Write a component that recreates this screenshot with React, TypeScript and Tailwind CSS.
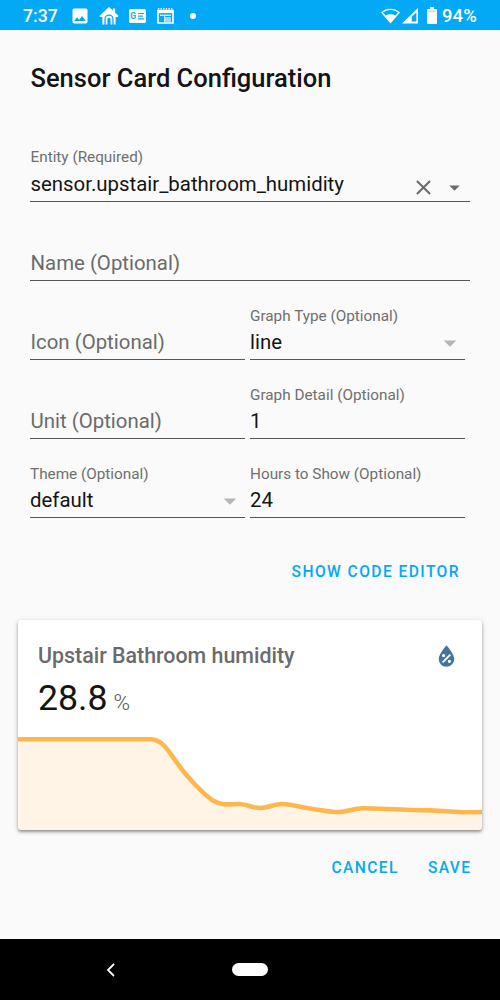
import { MdImage, MdClose, MdArrowDropDown } from 'react-icons/md';

type FieldProps = {
  label: string;
  value?: string;
  dropdown?: boolean;
  className?: string;
};

function Field({ label, value, dropdown, className = '' }: FieldProps) {
  return (
    <div className={`flex h-[79px] flex-col justify-end border-b border-[#555555] ${className}`}>
      {value && <div className="h-[19px] text-[15.3px] leading-5 text-[#6f6f6f]">{label}</div>}
      <div className="flex h-[34px] items-center justify-between">
        <span className={`text-[20.4px] leading-[34px] ${value ? 'text-[#141414]' : 'pl-[0.5px] text-[#6b6b6b]'}`}>
          {value || label}
        </span>
        {dropdown && <MdArrowDropDown className="mt-px size-[30px] text-[#b5b5b5]" />}
      </div>
    </div>
  );
}

function StatusBar() {
  return (
    <div className="flex h-[30px] items-center justify-between bg-[#03a9f4] pr-[23px] pl-[23px] text-white">
      <div className="flex items-center pt-px">
        <span className="w-[47px] text-[17.6px] leading-[30px] font-medium">7:37</span>
        <MdImage className="size-5" />
        <svg viewBox="0 0 20 20" className="ml-[9px] size-5" fill="currentColor">
          <path d="M10 1 L14 4.6 V2.4 H16.2 V6.7 L19.6 10 L18.6 11 H16.6 V18.5 H14.6 V13 A4.6 4.6 0 0 0 5.4 13 V18.5 H3.4 V11 H1.4 L.4 10Z" />
          <path d="M6.7 18.5 V13 A3.3 3.3 0 0 1 13.3 13 V18.5 H11.6 V13.4 A1.6 1.6 0 0 0 8.4 13.4 V18.5Z" />
        </svg>
        <svg viewBox="0 0 17 14" className="ml-[10px] h-[14px] w-[17px]">
          <rect width="17" height="14" rx="1.5" fill="currentColor" />
          <text x="1.2" y="10" fontSize="8.5" fontWeight="700" fill="#03a9f4">G</text>
          <path d="M9 4.5H15M9 7.2H14M9 9.9H15" stroke="#03a9f4" strokeWidth="1.2" />
        </svg>
        <svg viewBox="0 0 17 16" className="ml-[11px] h-4 w-[17px]" fill="none" stroke="currentColor">
          <path d="M1 2.5H16V15H1Z" strokeWidth="1.6" />
          <path d="M1 4H16" strokeWidth="2.2" />
          <path d="M1 .8H16" strokeWidth="1.4" strokeDasharray="1.3 1.3" />
          <path d="M3 7.3H14" strokeWidth="1.3" />
          <path d="M8 9H14V14H8Z" fill="#ffffff" fillOpacity="0.6" stroke="none" />
          <path d="M7.6 8V14" strokeWidth="0.8" />
        </svg>
        <span className="ml-[16px] size-[6px] rounded-full bg-white" />
      </div>
      <div className="flex items-center pt-px">
        <svg viewBox="0 0 19 16" className="h-4 w-[19px]">
          <path d="M1 4.5 C5.5 .3 13.5 .3 18 4.5 L9.5 14.4Z" fill="none" stroke="currentColor" strokeWidth="1.4" />
          <path d="M4 8 C7 5.7 12 5.7 15 8 L9.5 14.8Z" fill="currentColor" />
        </svg>
        <svg viewBox="0 0 16 16" className="ml-[2px] size-4">
          <path d="M0 15.5 L16 0 V15.5Z M9.7 13.6 H14.4 V4.4 L9.7 8.8Z" fill="currentColor" fillRule="evenodd" />
        </svg>
        <svg viewBox="0 0 10 17" className="ml-[9px] h-[17px] w-[10px]" fill="currentColor">
          <path d="M3 0H7V2H9Q10 2 10 3V16Q10 17 9 17H1Q0 17 0 16V3Q0 2 1 2H3Z" />
          <path d="M1.5 4.2H8.5" stroke="#7dd1f8" strokeWidth="1" />
        </svg>
        <span className="ml-[5px] text-[18.4px] leading-[30px] font-medium tracking-[0.2px]">94%</span>
      </div>
    </div>
  );
}

function SensorCard() {
  return (
    <div className="mx-[18px] mt-[31px] flex h-[210px] flex-col rounded-[3px] bg-white shadow-[0_2px_3px_rgba(0,0,0,0.35),0_1px_6px_rgba(0,0,0,0.12)]">
      <div className="flex h-[46px] items-end justify-between pr-[20px] pl-5">
        <span className="-mb-px text-[21.4px] leading-[22px] font-medium text-[#6b6b6b]">Upstair Bathroom humidity</span>
        <svg viewBox="0 0 24 24" className="-mb-[6px] size-[31px] fill-[#44739e]">
          <path d="M12,3.25C12,3.25 6,10 6,14C6,17.32 8.69,20 12,20A6,6 0 0,0 18,14C18,10 12,3.25 12,3.25M14.47,9.97L15.53,11.03L9.53,17.03L8.47,15.97M9.75,10A1.25,1.25 0 0,1 11,11.25A1.25,1.25 0 0,1 9.75,12.5A1.25,1.25 0 0,1 8.5,11.25A1.25,1.25 0 0,1 9.75,10M14.25,14.5A1.25,1.25 0 0,1 15.5,15.75A1.25,1.25 0 0,1 14.25,17A1.25,1.25 0 0,1 13,15.75A1.25,1.25 0 0,1 14.25,14.5Z" />
        </svg>
      </div>
      <div className="flex items-baseline pl-5">
        <span className="text-[35.7px] leading-[64px] text-[#141414]">28.8</span>
        <span className="ml-[6px] text-[22.4px] font-light text-[#555555]">%</span>
      </div>
      <svg viewBox="0 0 464 100" className="mt-auto h-[100px] w-full rounded-b-[3px]">
        <path
          d="M0 9.3 H132 C145 9.3 151 22 157 30 C169 48 186 64 194 70 C206 77 214 73.5 222 74 C230 74.6 234 78 242 78 C250 78 256 74 264 74 C271 74 278 76 286 77.5 C300 80 312 82 320 82 C330 82 334 78.2 345 78.2 C360 78.2 380 79.8 412 80.4 C430 81 436 82.2 448 82.2 L464 82 V100 H0Z"
          fill="#ff9800"
          fillOpacity="0.1"
        />
        <path
          d="M0 9.3 H132 C145 9.3 151 22 157 30 C169 48 186 64 194 70 C206 77 214 73.5 222 74 C230 74.6 234 78 242 78 C250 78 256 74 264 74 C271 74 278 76 286 77.5 C300 80 312 82 320 82 C330 82 334 78.2 345 78.2 C360 78.2 380 79.8 412 80.4 C430 81 436 82.2 448 82.2 L464 82"
          fill="none"
          stroke="#ffb74d"
          strokeWidth="4.6"
        />
      </svg>
    </div>
  );
}

export default function App() {
  return (
    <div className="flex h-[1000px] w-[500px] flex-col bg-[#fafafa] font-[Roboto,sans-serif]">
      <StatusBar />
      <h1 className="mt-[30px] ml-[30.5px] text-[25.5px] leading-9 font-medium text-[#141414]">
        Sensor Card Configuration
      </h1>

      {/* Editor form */}
      <div className="mt-[27px] mr-[30px] ml-[30px] flex flex-col">
        <div className="flex h-[79px] flex-col justify-end border-b border-[#555555]">
          <div className="h-5 pl-[0.5px] text-[15.3px] leading-5 text-[#6f6f6f]">Entity (Required)</div>
          <div className="flex h-[34px] items-center">
            <span className="flex-1 pl-[0.5px] text-[20.4px] leading-[34px] text-[#141414]">sensor.upstair_bathroom_humidity</span>
            <MdClose className="mt-[6px] size-[25px] text-[#6b6b6b]" />
            <MdArrowDropDown className="mt-[6px] mr-[3px] ml-[6px] size-[25px] text-[#6b6b6b]" />
          </div>
        </div>
        <Field label="Name (Optional)" />
        <div className="grid grid-cols-[215px_215px] gap-x-[5px]">
          <Field label="Icon (Optional)" />
          <Field label="Graph Type (Optional)" value="line" dropdown />
          <Field label="Unit (Optional)" />
          <Field label="Graph Detail (Optional)" value="1" />
          <Field label="Theme (Optional)" value="default" dropdown />
          <Field label="Hours to Show (Optional)" value="24" />
        </div>
      </div>

      <button className="mt-[37px] mr-[40px] h-[34px] self-end text-[15.6px] leading-8 font-medium tracking-[1.42px] text-[#03a9f4]">
        SHOW CODE EDITOR
      </button>

      <SensorCard />

      {/* Dialog actions */}
      <div className="mt-5 mr-[28.5px] flex justify-end gap-[29px] text-[15.6px] leading-9 font-medium tracking-[1.4px] text-[#03a9f4]">
        <button>CANCEL</button>
        <button>SAVE</button>
      </div>

      <div className="mt-auto flex h-[61px] items-center bg-black">
        <svg viewBox="0 0 10 14" className="ml-[106px] h-[14px] w-[10px]" fill="none" stroke="#fff" strokeWidth="1.8">
          <path d="M8 1L2 7L8 13" />
        </svg>
        <div className="ml-[116px] h-[13px] w-9 rounded-full bg-white" />
      </div>
    </div>
  );
}
